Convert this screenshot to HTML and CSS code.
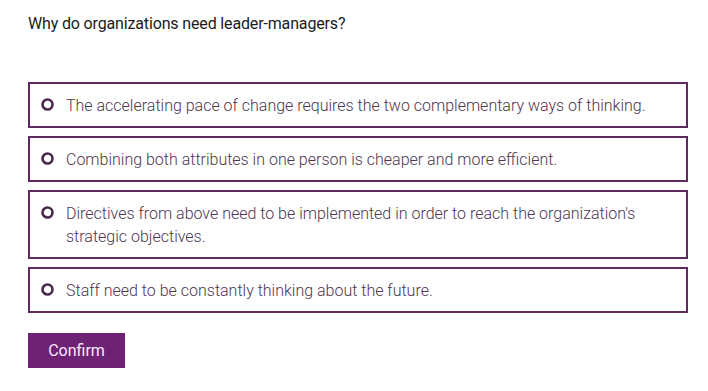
FILE: index.html
```html
<!DOCTYPE html>
<html lang="en">
<head>
    <meta charset="UTF-8">
    <title>Quiz question</title>
    <link rel="stylesheet" href="styles.css">
</head>
<body>
    <div class="quiz">
        <p class="question">Why do organizations need leader-managers?</p>

        <div class="options">
            <label class="option">
                <input type="radio" name="answer">
                <svg class="radio" viewBox="0 0 13 13"><circle cx="6.5" cy="6.5" r="5" /></svg>
                <span class="text">The accelerating pace of change requires the two complementary ways of thinking.</span>
            </label>
            <label class="option">
                <input type="radio" name="answer">
                <svg class="radio" viewBox="0 0 13 13"><circle cx="6.5" cy="6.5" r="5" /></svg>
                <span class="text">Combining both attributes in one person is cheaper and more efficient.</span>
            </label>
            <label class="option">
                <input type="radio" name="answer">
                <svg class="radio" viewBox="0 0 13 13"><circle cx="6.5" cy="6.5" r="5" /></svg>
                <span class="text">Directives from above need to be implemented in order to reach the organization's strategic objectives.</span>
            </label>
            <label class="option">
                <input type="radio" name="answer">
                <svg class="radio" viewBox="0 0 13 13"><circle cx="6.5" cy="6.5" r="5" /></svg>
                <span class="text">Staff need to be constantly thinking about the future.</span>
            </label>
        </div>

        <button class="confirm">Confirm</button>
    </div>
</body>
</html>
```

FILE: styles.css
```css
body {
    margin: 0;
    padding: 14px 20px 0 28px;
    background: #fff;
    font-family: Roboto, "Liberation Sans", Arial, sans-serif;
}

.question {
    margin: 0;
    font-size: 16px;
    line-height: 20px;
    color: #1b1b1b;
    letter-spacing: -0.15px;
}

.options {
    display: flex;
    flex-direction: column;
    gap: 8px;
    width: 660px;
    margin-top: 48px;
}

.option {
    display: flex;
    align-items: flex-start;
    border: 2px solid #5d2b60;
    padding: 10px 12px 9px 11px;
    cursor: pointer;
}

.option input {
    display: none;
}

.radio {
    flex: none;
    width: 13px;
    height: 13px;
    margin: 4px 12px 0 0;
    fill: none;
    stroke: #4a2a4c;
    stroke-width: 2.6;
}

.text {
    font-size: 16px;
    font-weight: 300;
    line-height: 23px;
    color: #4e3550;
}

.confirm {
    margin-top: 20px;
    width: 97px;
    height: 35px;
    border: none;
    background: #6e2274;
    color: #fbe8fb;
    font-family: inherit;
    font-size: 16px;
    cursor: pointer;
}
```
